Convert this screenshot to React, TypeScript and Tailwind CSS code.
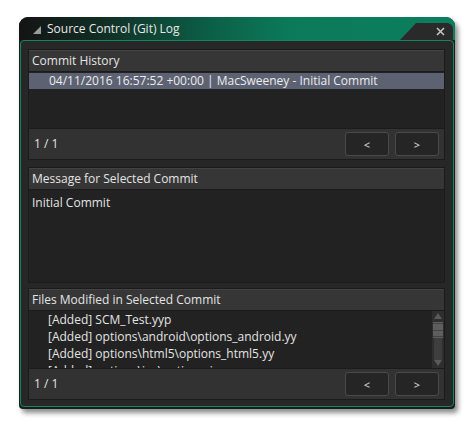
import React from 'react';

const files = [
  '[Added] SCM_Test.yyp',
  '[Added] options\\android\\options_android.yy',
  '[Added] options\\html5\\options_html5.yy',
  '[Added] options\\ios\\options_ios.yy',
];

const NavButton = ({ label }: { label: string }) => (
  <button className="flex h-[24px] w-[44px] items-center justify-center rounded-[3px] border border-[#4a4a4a] bg-[#252525] text-[11px] font-semibold leading-none text-[#d0d0d0]">
    {label}
  </button>
);

const Footer = () => (
  <div className="flex h-[31px] shrink-0 items-center justify-between border-t border-[#1b1b1b] bg-[#323232] pl-[5px] pr-[5px]">
    <span>1 / 1</span>
    <div className="flex gap-[6px]">
      <NavButton label="<" />
      <NavButton label=">" />
    </div>
  </div>
);

const PanelHeader = ({ title }: { title: string }) => (
  <div className="flex h-[22px] shrink-0 items-center border-b border-[#1b1b1b] bg-[#363636] pl-[3px] shadow-[inset_0_1px_0_#434343]">
    {title}
  </div>
);

const ScrollBar = () => (
  <div className="flex w-[12px] flex-col items-center bg-[#2e2e2e] py-[2px]">
    <svg width="8" height="6" viewBox="0 0 8 6">
      <polygon points="4,0 8,6 0,6" fill="#5a5a5a" />
    </svg>
    <div className="mt-[3px] flex h-[16px] w-[10px] flex-col justify-between bg-[#5e5e5e] py-[1px]">
      <div className="h-[1px] bg-[#444]" />
      <div className="h-[1px] bg-[#444]" />
      <div className="h-[1px] bg-[#444]" />
    </div>
    <div className="w-[8px] flex-1 bg-[#3e3e3e]" />
    <svg width="8" height="6" viewBox="0 0 8 6">
      <polygon points="0,0 8,0 4,6" fill="#5a5a5a" />
    </svg>
  </div>
);

export default function App() {
  return (
    <div className="h-[430px] w-[473px] overflow-hidden bg-white pt-[17px] font-['Open_Sans',sans-serif] text-[12px] text-[#e4e4e4]">
      <div className="ml-[19px] w-[436px] rounded-t-[9px] rounded-b-[4px] bg-[#1c1c1c] pb-[2px] shadow-[3px_4px_5px_rgba(0,0,0,0.45)]">
        {/* title bar */}
        <div className="relative flex h-[23px] items-center rounded-t-[9px] bg-[linear-gradient(90deg,#141414_0%,#112c23_18%,#0c5c45_42%,#0b7a5a_62%,#0c7f5e_100%)] pl-[14px]">
          <svg width="8" height="8" viewBox="0 0 8 8" className="mt-[3px]">
            <polygon points="8,0 8,8 0,8" fill="#9c9c9c" />
          </svg>
          <span className="ml-[6px] text-[12px] text-[#e8e8e8]">Source Control (Git) Log</span>
          <div className="absolute right-[2px] bottom-0 flex h-[17px] w-[53px] items-center justify-end rounded-tr-[6px] bg-[#2a2a2a] pr-[8px] [clip-path:polygon(16px_0,100%_0,100%_100%,0_100%)]">
            <svg width="9" height="9" viewBox="0 0 9 9">
              <path d="M1 1 L8 8 M8 1 L1 8" stroke="#c4c4c4" strokeWidth="1.6" />
            </svg>
          </div>
        </div>
        {/* body */}
        <div className="relative mx-[1px] flex flex-col rounded-[4px] border border-[#16845f] bg-[#272727] pt-[8px] pr-[8px] pb-[6px] pl-[7px]">
          <div className="flex h-[111px] flex-col border border-[#1b1b1b]">
            <PanelHeader title="Commit History" />
            <div className="flex-1 bg-[#222222] pt-[1px]">
              <div className="flex h-[16px] items-center bg-[#5d6272] pl-[20px] text-[#ececec]">
                04/11/2016 16:57:52 +00:00 | MacSweeney - Initial Commit
              </div>
            </div>
            <Footer />
          </div>

          <div className="mt-[7px] flex h-[116px] flex-col border border-[#1b1b1b]">
            <PanelHeader title="Message for Selected Commit" />
            <div className="flex-1 bg-[#222222] pt-[4px] pl-[3px]">Initial Commit</div>
          </div>

          <div className="mt-[5px] flex h-[112px] flex-col border border-[#1b1b1b]">
            <PanelHeader title="Files Modified in Selected Commit" />
            <div className="flex min-h-0 flex-1 overflow-hidden bg-[#222222]">
              <div className="min-h-0 flex-1 overflow-hidden pl-[19px]">
                {files.map((f) => (
                  <div key={f} className="h-[17px] leading-[17px] whitespace-nowrap">
                    {f}
                  </div>
                ))}
              </div>
              <ScrollBar />
            </div>
            <Footer />
          </div>

          <div className="absolute bottom-[-1px] left-[176px] h-[3px] w-[72px] bg-[radial-gradient(#3e3e3e_0.5px,transparent_0.7px)] bg-[length:2px_2px] opacity-70" />
        </div>
      </div>
    </div>
  );
}
